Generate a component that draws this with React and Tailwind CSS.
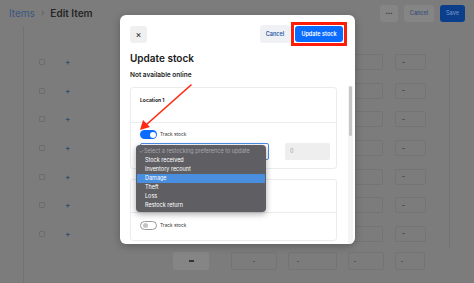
import React from "react";

const rows = [0, 1, 2, 3, 4, 5, 6];

const menu = [
  "Stock received",
  "Inventory recount",
  "Damage",
  "Theft",
  "Loss",
  "Restock return",
];

function Toggle({ on }) {
  return on ? (
    <div className="w-[17px] h-[9px] rounded-full bg-[#0a6cff] flex items-center justify-end px-[1.5px]">
      <div className="w-[6px] h-[6px] rounded-full bg-white" />
    </div>
  ) : (
    <div className="w-[17px] h-[9px] rounded-full border border-[#9a9a9a] bg-white flex items-center px-[1.5px]">
      <div className="w-[5px] h-[5px] rounded-full bg-[#c4c4c4]" />
    </div>
  );
}

export default function App() {
  return (
    <div
      className="relative w-[474px] h-[283px] overflow-hidden bg-[#7c7c7c]"
      style={{ fontFamily: "Inter, 'Liberation Sans', sans-serif" }}
    >
      {/* dimmed page behind */}
      <div className="flex items-center h-[26px] pl-[9px] pr-[9px]">
        <span className="text-[10px] text-[#3a5680]">Items</span>
        <span className="text-[9px] text-[#5a5a5a] mx-[6px]">›</span>
        <span className="text-[10px] font-semibold text-[#262626]">Edit Item</span>
        <div className="ml-auto flex items-center gap-[6px]">
          <div className="w-[18px] h-[17px] rounded-[3px] bg-[#858585] flex items-center justify-center text-[7px] font-bold text-[#333] leading-none pb-[3px]">
            ...
          </div>
          <div className="w-[30px] h-[17px] rounded-[3px] bg-[#858585] flex items-center justify-center text-[5.5px] font-medium text-[#34507a]">
            Cancel
          </div>
          <div className="w-[25px] h-[17px] rounded-[3px] bg-[#0b3f8c] flex items-center justify-center text-[5.5px] font-medium text-[#6e8fc0]">
            Save
          </div>
        </div>
      </div>

      <div className="flex">
        <div className="w-[24px] border-r border-[#727272] h-[257px]" />
        <div className="flex-1 pt-[22px]">
          {rows.map((r) => (
            <div key={r} className="flex items-center h-[28.6px]">
              <div className="ml-[15px] w-[6px] h-[6px] rounded-[1px] border border-[#6c6c6c]" />
              <span className="ml-[20px] text-[8px] font-semibold text-[#2e4b73]">+</span>
              <div className="ml-auto flex items-center gap-[12px] pr-[23px]">
                <div className="w-[35px] h-[16px] rounded-[2px] border border-[#747474] flex items-center pl-[3px]">
                  <span className="w-[2px] h-[1px] bg-[#555]" />
                </div>
                <div className="w-[31px] h-[16px] rounded-[2px] border border-[#747474] flex items-center pl-[6px]">
                  <span className="w-[3px] h-[1px] bg-[#555]" />
                </div>
              </div>
              <div className="w-[1px] h-[28.6px] bg-[#737373]" />
              <div className="w-[24px]" />
            </div>
          ))}
          <div className="mt-[3px] flex items-center h-[20px] pl-[149px] gap-[22px]">
            <div className="w-[36px] h-[18px] rounded-[2px] bg-[#858585] flex items-center justify-center">
              <span className="w-[5px] h-[1.5px] bg-[#333]" />
            </div>
            <div className="flex gap-[11px]">
              <div className="w-[46px] h-[18px] rounded-[2px] border border-[#747474] flex items-center justify-center">
                <span className="w-[2px] h-[1px] bg-[#555]" />
              </div>
              <div className="w-[49px] h-[18px] rounded-[2px] border border-[#747474] flex items-center pl-[8px]">
                <span className="w-[2px] h-[1px] bg-[#555]" />
              </div>
              <div className="w-[36px] h-[18px] rounded-[2px] border border-[#747474] flex items-center pl-[5px]">
                <span className="w-[2px] h-[1px] bg-[#555]" />
              </div>
              <div className="w-[30px] h-[18px] rounded-[2px] border border-[#747474] flex items-center pl-[5px]">
                <span className="w-[2px] h-[1px] bg-[#555]" />
              </div>
            </div>
          </div>
        </div>
      </div>

      {/* modal */}
      <div className="absolute left-[120px] top-[15px] w-[235px] h-[229px] rounded-[6px] bg-white shadow-[0_2px_8px_rgba(0,0,0,0.25)] overflow-hidden">
        <div className="flex items-center pl-[10px] pr-[8px] pt-[7px]">
          <div className="w-[17px] h-[17px] rounded-[3px] bg-[#f0f0f0] flex items-center justify-center text-[9px] text-[#222] leading-none">
            ×
          </div>
          <div className="ml-auto mr-[1px] w-[30px] h-[18px] rounded-[3px] bg-[#eff1f4] flex items-center justify-center text-[5.5px] font-semibold text-[#2c5ba6]">
            Cancel
          </div>
          <div className="border-[3px] border-[#ff1c08] p-[1px]">
            <div className="w-[48px] h-[16px] rounded-[3px] bg-[#0a6cff] flex items-center justify-center text-[5.5px] font-semibold text-white">
              Update stock
            </div>
          </div>
        </div>

        <div className="flex">
          <div className="flex-1 pl-[10px]">
            <div className="mt-[5px] text-[10px] font-semibold text-[#1a1a1a] leading-[14px]">
              Update stock
            </div>
            <div className="mt-[6px] text-[6.5px] font-semibold text-[#1a1a1a] leading-[9px]">
              Not available online
            </div>

            <div className="mt-[7px] w-[207px] border border-[#ececec] rounded-[3px]">
              <div className="h-[35px] border-b border-[#ececec] pl-[9px] pt-[9px] text-[5px] font-bold text-[#1a1a1a]">
                Location 1
              </div>
              <div className="pl-[9px] pt-[7px] pb-[8px]">
                <div className="flex items-center gap-[3px]">
                  <Toggle on />
                  <span className="text-[4.8px] text-[#333]">Track stock</span>
                </div>
                <div className="mt-[4px] flex items-center">
                  <div className="w-[129px] h-[17px] rounded-[2px] border border-[#4a8fe6]" />
                  <div className="ml-[16px] w-[45px] h-[17px] rounded-[2px] bg-[#eeeeee] flex items-center pl-[5px] text-[5.5px] text-[#999]">
                    0
                  </div>
                </div>
              </div>
            </div>

            <div className="mt-[10px] w-[207px] h-[62px] border border-[#ececec] rounded-[3px]">
              <div className="h-[33px] border-b border-[#ececec]" />
              <div className="flex items-center gap-[3px] pl-[9px] pt-[8px]">
                <Toggle />
                <span className="text-[4.8px] text-[#333]">Track stock</span>
              </div>
            </div>
          </div>
          <div className="w-[5px] mr-[2px] mt-[40px] h-[170px] bg-[#f4f4f4] flex justify-center">
            <div className="w-[3px] h-[50px] rounded-full bg-[#c6c6c6]" />
          </div>
        </div>

        {/* open select menu */}
        <div className="absolute left-[16px] top-[130px] w-[130px] rounded-[4px] bg-[#5f5f63] shadow-[0_2px_6px_rgba(0,0,0,0.35)] py-[2px] px-[1px] text-[5.5px] leading-[9px]">
          <div className="flex text-[#a8a8ac] pl-[2px]">
            <span className="w-[5px]">✓</span>
            <span>Select a restocking preference to update</span>
          </div>
          {menu.map((m) => (
            <div
              key={m}
              className={
                m === "Damage"
                  ? "pl-[8px] bg-[#4a8ee0] text-white rounded-[1px]"
                  : "pl-[8px] text-white"
              }
            >
              {m}
            </div>
          ))}
        </div>
      </div>

      {/* annotation arrow */}
      <svg className="absolute left-0 top-0" width="474" height="283">
        <line x1="191" y1="85" x2="146" y2="125" stroke="#ff2a14" strokeWidth="1.6" strokeLinecap="round" />
        <polygon points="140,130 143,120 150,127" fill="#ff2a14" />
      </svg>
    </div>
  );
}
